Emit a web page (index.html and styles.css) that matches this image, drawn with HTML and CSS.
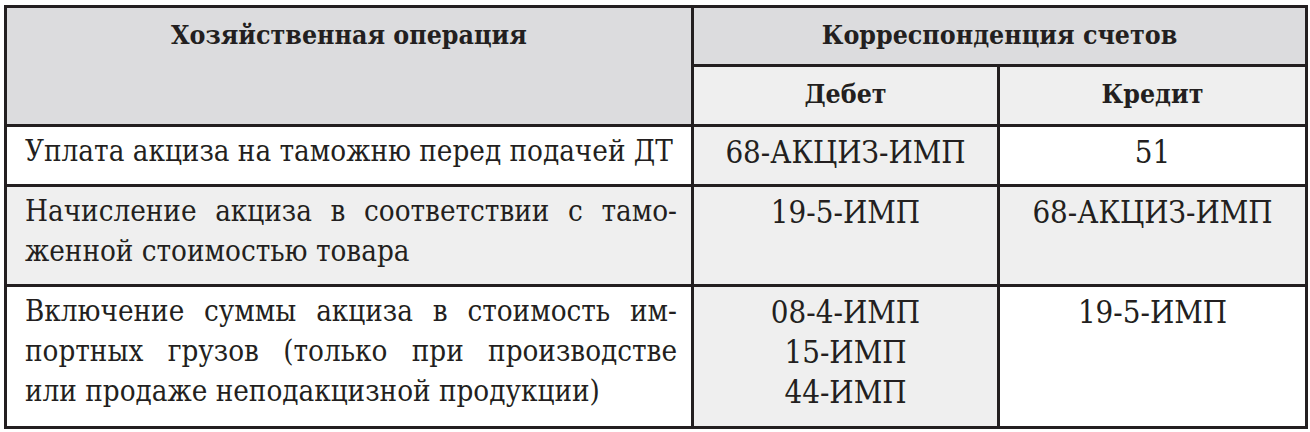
FILE: index.html
```html
<!DOCTYPE html>
<html lang="ru">
<head>
<meta charset="utf-8">
<title>Корреспонденция счетов</title>
<link rel="stylesheet" href="styles.css">
</head>
<body>
<table class="tbl">
  <colgroup>
    <col class="c1">
    <col class="c2">
    <col class="c3">
  </colgroup>
  <thead>
    <tr class="h1">
      <th class="hd" rowspan="2">Хозяйственная операция</th>
      <th class="hd" colspan="2">Корреспонденция счетов</th>
    </tr>
    <tr class="h2">
      <th class="hd2">Дебет</th>
      <th class="hd2">Кредит</th>
    </tr>
  </thead>
  <tbody>
    <tr class="r1">
      <td class="op white"><span class="ll nw">Уплата акциза на таможню перед подачей ДТ</span></td>
      <td class="acc gray">68-АКЦИЗ-ИМП</td>
      <td class="acc white">51</td>
    </tr>
    <tr class="r2">
      <td class="op gray"><span class="jl">Начисление акциза в соответствии с тамо-</span><span class="ll">женной стоимостью товара</span></td>
      <td class="acc gray">19-5-ИМП</td>
      <td class="acc gray">68-АКЦИЗ-ИМП</td>
    </tr>
    <tr class="r3">
      <td class="op white"><span class="jl">Включение суммы акциза в стоимость им-</span><span class="jl">портных грузов (только при производстве</span><span class="ll">или продаже неподакцизной продукции)</span></td>
      <td class="acc gray"><span class="ll">08-4-ИМП</span><span class="ll">15-ИМП</span><span class="ll">44-ИМП</span></td>
      <td class="acc white">19-5-ИМП</td>
    </tr>
  </tbody>
</table>
</body>
</html>
```

FILE: styles.css
```css
html, body {
  margin: 0;
  background: #ffffff;
}
body {
  padding: 5px 0 0 4px;
  font-family: "DejaVu Serif Condensed", "DejaVu Serif", serif;
  font-stretch: condensed;
  color: #231f20;
}
.tbl {
  border-collapse: collapse;
  table-layout: fixed;
  width: 1301px;
  border: 3px solid #231f20;
}
.c1 { width: 687px; }
.c2 { width: 306px; }
.c3 { width: 308px; }
.tbl th, .tbl td {
  border: 3px solid #231f20;
  vertical-align: top;
  padding: 0;
}
.tbl .hd {
  background: #dcdcde;
  font-weight: bold;
  font-size: 26.5px;
  line-height: 36px;
  padding-top: 9px;
  text-align: center;
}
.h1 { height: 59px; }
.h2 { height: 60px; }
.tbl .hd2 {
  background: #efefef;
  font-weight: bold;
  font-size: 26.5px;
  line-height: 36px;
  padding-top: 9px;
  text-align: center;
}
.tbl .op {
  font-size: 29.3px;
  line-height: 40px;
  padding: 4px 14px 8px 18px;
  text-align: justify;
}
.tbl .acc {
  font-size: 31px;
  line-height: 40px;
  padding: 5px 8px 8px 8px;
  text-align: center;
}
.white { background: #ffffff; }
.gray { background: #efefef; }
.jl {
  display: block;
  text-align: justify;
  text-align-last: justify;
}
.ll { display: block; }
.nw { white-space: nowrap; }
.r1 { height: 60px; }
.r2 { height: 100px; }
.r3 { height: 142px; }
```
